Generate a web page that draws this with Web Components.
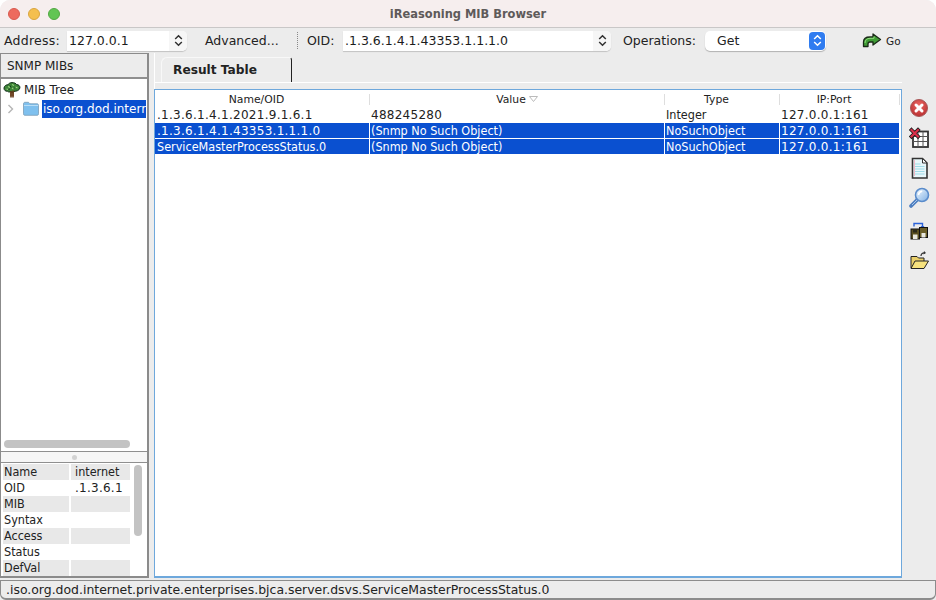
<!DOCTYPE html>
<html>
<head>
<meta charset="utf-8">
<title>iReasoning MIB Browser</title>
<style>
  html, body { margin: 0; height: 100%; background: #fff; }
  body { font: 12.5px "DejaVu Sans", sans-serif; color: #222; overflow: hidden; }
</style>
</head>
<body>
<mib-window>
  <mib-titlebar slot="title">iReasoning MIB Browser</mib-titlebar>
  <mib-toolbar slot="toolbar"></mib-toolbar>
  <mib-sidebar slot="side"></mib-sidebar>
  <mib-results slot="main"></mib-results>
  <mib-rail slot="rail"></mib-rail>
  <mib-status slot="status">.iso.org.dod.internet.private.enterprises.bjca.server.dsvs.ServiceMasterProcessStatus.0</mib-status>
</mib-window>

<script>
class MibWindow extends HTMLElement {
  constructor() {
    super();
    this.attachShadow({ mode: 'open' });
    this.shadowRoot.innerHTML = `
      <style>
        :host {
          display: grid;
          width: 936px;
          height: 600px;
          grid-template-rows: 28px 25px 1fr 20px;
          grid-template-columns: 149px 1fr 34px;
          grid-template-areas:
            "title title title"
            "toolbar toolbar toolbar"
            "side main rail"
            "status status status";
          background: #ececec;
          border-radius: 10px 10px 0 0;
          overflow: hidden;
        }
        ::slotted([slot=title]) { grid-area: title; }
        ::slotted([slot=toolbar]) { grid-area: toolbar; }
        ::slotted([slot=side]) { grid-area: side; }
        ::slotted([slot=main]) { grid-area: main; }
        ::slotted([slot=rail]) { grid-area: rail; }
        ::slotted([slot=status]) { grid-area: status; }
      </style>
      <slot name="title"></slot>
      <slot name="toolbar"></slot>
      <slot name="side"></slot>
      <slot name="main"></slot>
      <slot name="rail"></slot>
      <slot name="status"></slot>
    `;
  }
}

class MibTitlebar extends HTMLElement {
  constructor() {
    super();
    this.attachShadow({ mode: 'open' });
    this.shadowRoot.innerHTML = `
      <style>
        :host {
          display: flex;
          align-items: center;
          justify-content: center;
          position: relative;
          background: #f6eeee;
          border-bottom: 1px solid #c9c7c7;
          box-sizing: border-box;
          font: bold 12.7px "DejaVu Sans", sans-serif;
          font-stretch: condensed;
          color: #5e5a5a;
        }
        .lights { position: absolute; left: 8px; top: 8px; display: flex; gap: 8px; }
        .lights i { width: 12px; height: 12px; border-radius: 50%; display: block; box-sizing: border-box; }
        .r { background: #ed6a5e; border: 1px solid #d85a50; }
        .y { background: #f4bf4f; border: 1px solid #d9a53f; }
        .g { background: #61c554; border: 1px solid #52a843; }
      </style>
      <div class="lights"><i class="r"></i><i class="y"></i><i class="g"></i></div>
      <slot></slot>
    `;
  }
}

class MibCombo extends HTMLElement {
  constructor() {
    super();
    this.attachShadow({ mode: 'open' });
    this.shadowRoot.innerHTML = `
      <style>
        :host {
          display: flex;
          align-items: center;
          height: 20px;
          background: #fff;
          border-radius: 0 5px 5px 0;
          box-shadow: 0 1px 1px rgba(0,0,0,.18);
          box-sizing: border-box;
          padding-left: 2px;
          font: 12.5px "DejaVu Sans", sans-serif;
          color: #1c1c1c;
        }
        .txt { flex: 1; white-space: nowrap; overflow: hidden; }
        .btn { width: 18px; height: 20px; display: flex; align-items: center; justify-content: center; background: #f6f6f6; border-radius: 0 5px 5px 0; }
      </style>
      <div class="txt"><slot></slot></div>
      <div class="btn">
        <svg width="9" height="13" viewBox="0 0 9 13" fill="none" stroke="#333" stroke-width="1.5">
          <path d="M1.2 5 4.5 1.7 7.8 5M1.2 8 4.5 11.3 7.8 8"/>
        </svg>
      </div>
    `;
  }
}

class MibToolbar extends HTMLElement {
  constructor() {
    super();
    this.attachShadow({ mode: 'open' });
    this.shadowRoot.innerHTML = `
      <style>
        :host {
          display: flex;
          align-items: center;
          padding-left: 4px;
          box-sizing: border-box;
          font: 12.5px "DejaVu Sans", sans-serif;
          color: #222;
          white-space: nowrap;
        }
        .lbl-addr { width: 56px; letter-spacing: .25px; }
        .addr { width: 120px; margin-left: 7px; }
        .adv { margin-left: 18px; width: 92px; }
        .sep { width: 0; height: 17px; border-left: 1px dotted #888; margin-right: 9px; }
        .lbl-oid { width: 30px; }
        .oid { width: 268px; margin-left: 6px; }
        .ops { margin-left: 12px; width: 73px; }
        .get {
          display: flex; align-items: center; justify-content: space-between;
          width: 121px; height: 20px; margin-left: 9px;
          background: #fff; border-radius: 5px;
          box-shadow: 0 1px 1px rgba(0,0,0,.25);
          padding: 0 1px 0 12px; box-sizing: border-box;
        }
        .stepper {
          width: 16px; height: 18px; border-radius: 4px; background: #2f7cf0;
          display: flex; align-items: center; justify-content: center;
        }
        .go { display: flex; align-items: center; gap: 4px; margin-left: 36px; font-size: 10.5px; }
      </style>
      <span class="lbl-addr">Address:</span>
      <mib-combo class="addr">127.0.0.1</mib-combo>
      <span class="adv">Advanced...</span>
      <i class="sep"></i>
      <span class="lbl-oid">OID:</span>
      <mib-combo class="oid">.1.3.6.1.4.1.43353.1.1.1.0</mib-combo>
      <span class="ops">Operations:</span>
      <div class="get">
        <span>Get</span>
        <div class="stepper">
          <svg width="9" height="13" viewBox="0 0 9 13" fill="none" stroke="#fff" stroke-width="1.5">
            <path d="M1.2 5 4.5 1.7 7.8 5M1.2 8 4.5 11.3 7.8 8"/>
          </svg>
        </div>
      </div>
      <div class="go">
        <svg width="20" height="15" viewBox="0 0 20 15">
          <path d="M1.5 13.5V9C1.5 5.5 4.5 4 8 4h3V1l7.5 5.5L11 12V9H8C6.5 9 6 10 6 11v2.5z" fill="#3f9c35" stroke="#1a2a18" stroke-width="1.3" stroke-linejoin="round"/>
          <path d="M3 10C3 7 5 5.3 8 5.3h4V3.5" fill="none" stroke="#8fdc7c" stroke-width="1"/>
        </svg>
        <span>Go</span>
      </div>
    `;
  }
}

class MibSidebar extends HTMLElement {
  constructor() {
    super();
    this.attachShadow({ mode: 'open' });
    const props = [['Name', 'internet'], ['OID', '.1.3.6.1'], ['MIB', ''], ['Syntax', ''], ['Access', ''], ['Status', ''], ['DefVal', '']];
    const rows = props.map(([k, v], i) => `
      <div class="row ${i % 2 ? '' : 'alt'}"><span class="k">${k}</span><span class="v ${i == 1 ? 'num' : ''}">${v}</span></div>`).join('');
    this.shadowRoot.innerHTML = `
      <style>
        :host {
          display: flex;
          flex-direction: column;
          border: 2px solid #8b8b8b;
          border-width: 1px 2px 2px 1px;
          box-sizing: border-box;
          margin-bottom: 2px;
          font: 12px "DejaVu Sans", sans-serif;
          color: #222;
          min-height: 0;
        }
        .head { display: flex; align-items: center; padding: 1px 0 0 6px; border-bottom: 2px solid #8f8f8f; height: 22px; }
        .tree { flex: 1; background: #fff; position: relative; border-bottom: 1px solid #8f8f8f; padding-top: 1px; }
        .node { display: flex; align-items: center; height: 19px; }
        .node svg { flex: none; }
        .root { padding-left: 2px; gap: 3px; font-size: 11.8px; }
        .child { padding-left: 6px; }
        .sel { background: #0a50d0; color: #fff; padding-left: 1px; width: 103px; overflow: hidden; white-space: nowrap; height: 18px; line-height: 18px; margin: 1px 0 0 3px; }
        .hbar { position: absolute; left: 3px; width: 126px; bottom: 3px; height: 8px; border-radius: 4px; background: #c3c3c3; }
        .split { height: 11px; display: flex; align-items: center; justify-content: center; background: #f6f6f6; border-bottom: 1px solid #8f8f8f; box-sizing: border-box; }
        .split i { width: 5px; height: 5px; border-radius: 50%; background: #d2d2d2; display: block; }
        .props { height: 112px; padding-top: 1px; background: #fff; display: flex; overflow: hidden; padding-left: 2px; font-size: 12.5px; font-stretch: condensed; }
        .grid { width: 127px; }
        .row { display: grid; grid-template-columns: 66px 59px; gap: 2px; height: 16px; line-height: 16px; }
        .row span { padding-left: 1px; }
        .row.alt span { background: #e8e8e8; }
        .row .v { padding-left: 4px; }
        .row .num { letter-spacing: .25px; font-size: 12px; font-stretch: normal; }
        .vbar { width: 8px; height: 71px; border-radius: 4px; background: #c3c3c3; margin: 1px 0 0 4px; }
      </style>
      <div class="head">SNMP MIBs</div>
      <div class="tree">
        <div class="node root">
          <svg width="18" height="16" viewBox="0 0 18 16">
            <path d="M8 15.500V10L5 7.500M10 15.500V10l3-3M9 11V6" fill="none" stroke="#5f3416" stroke-width="1.600"/>
            <path d="M9 .6C7 .6 5.500 1.600 5 2.800 3 2.600 1.200 4 1 6c-.2 2 1.500 3.500 3.500 3.300.8.900 2.400.9 3.300.2 1.200.6 2.500.5 3.200-.2 2.100.3 5.500-1 5.900-3.300.3-2-1.400-3.500-3.300-3.400C13 1.400 11.300.6 9 .6z" fill="#3d8438" stroke="#13301a"/>
            <path d="M5 4.500l2 1M9 2.500l2 1M12.500 5l2 1M3.500 7l1.500.5M9 6l1.500 1" stroke="#9ad27f" stroke-width="1.200"/>
            <path d="M7 3.500l1 2M11 6.500l1-1M5.500 7.500l1.500-.5" stroke="#163d1c"/>
            <path d="M8 14V9M10 14V8.500" fill="none" stroke="#6d3f1c" stroke-width="1.400"/>
          </svg>
          <span>MIB Tree</span>
        </div>
        <div class="node child">
          <svg width="7" height="10" viewBox="0 0 7 10" fill="none" stroke="#b5b5b5" stroke-width="1.400" style="margin-right:9px"><path d="M1.500 1 5.500 5 1.500 9"/></svg>
          <svg width="16" height="15" viewBox="0 0 16 15">
            <path d="M.5 3c0-1 .5-1.700 1.500-1.700h3.500l1.500 1.500h7c1 0 1.500.6 1.500 1.500v8.500c0 1-.5 1.500-1.500 1.500H2c-1 0-1.500-.5-1.500-1.500z" fill="#7fc0ee" stroke="#7b9cb5" stroke-width=".8"/>
            <rect x="1" y="4" width="14" height="1" fill="#b9def6"/>
          </svg>
          <div class="sel">iso.org.dod.internet</div>
        </div>
        <div class="hbar"></div>
      </div>
      <div class="split"><i></i></div>
      <div class="props">
        <div class="grid">${rows}</div>
        <div class="vbar"></div>
      </div>
    `;
  }
}

class MibResults extends HTMLElement {
  constructor() {
    super();
    this.attachShadow({ mode: 'open' });
    const data = [
      ['.1.3.6.1.4.1.2021.9.1.6.1', '488245280', 'Integer', '127.0.0.1:161', false],
      ['.1.3.6.1.4.1.43353.1.1.1.0', '(Snmp No Such Object)', 'NoSuchObject', '127.0.0.1:161', true],
      ['ServiceMasterProcessStatus.0', '(Snmp No Such Object)', 'NoSuchObject', '127.0.0.1:161', true]
    ];
    // numeric cells run wider and letter cells narrower than plain DejaVu
    const cell = t => `<span class="${/^[.\d:]+$/.test(t) ? 'num' : ''}">${t}</span>`;
    const rows = data.map(r => `
      <div class="row ${r[4] ? 'sel' : ''}">
        ${cell(r[0])}${cell(r[1])}${cell(r[2])}${cell(r[3])}
      </div>`).join('');
    this.shadowRoot.innerHTML = `
      <style>
        :host {
          display: flex;
          flex-direction: column;
          min-height: 0;
          font: 12.5px "DejaVu Sans", sans-serif;
          font-stretch: condensed;
          color: #222;
          padding-left: 5px;
        }
        .tabs { height: 30px; display: flex; align-items: flex-end; padding: 0 0 0 12px; border-bottom: 1px solid #fff; border-left: 1px solid #fff; flex: none; box-sizing: border-box; margin-left: 0; }
        .tab {
          width: 131px; height: 25px; box-sizing: border-box; margin-left: -6px;
          font: bold 12.2px "DejaVu Sans", sans-serif;
          padding: 5px 0 0 11px;
          background: #ececec;
          border-top: 1px solid #f8f8f8;
          border-left: 1px solid #f8f8f8;
          border-right: 1px solid #222;
          border-radius: 6px 3px 0 0;
        }
        .gap { height: 6px; flex: none; border-left: 1px solid #fff; }
        .frame {
          flex: 1; margin-bottom: 2px;
          background: #fff; border: 1px solid #6ea8dc; border-bottom-width: 2px;
          box-sizing: border-box; min-height: 0;
        }
        .cols { display: grid; grid-template-columns: 215px 295px 115px 120px; }
        .hdr { height: 17px; align-items: center; font-size: 10.8px; font-stretch: normal; text-align: center; padding-top: 2px; box-sizing: border-box; }
        .hdr span { border-right: 1px solid #dedede; height: 11px; line-height: 11px; box-sizing: border-box; padding-right: 11px; }
        .hdr span.value { padding-right: 0; }
        .hdr svg { margin-left: 3px; vertical-align: 1px; }
        .row { display: grid; grid-template-columns: 215px 295px 115px 120px; height: 15px; line-height: 16px; margin-bottom: 1px; }
        .row span { padding-left: 1px; white-space: nowrap; overflow: hidden; }
        .row span:first-child { padding-left: 2px; }
        .row .num { font-size: 12px; font-stretch: normal; letter-spacing: .27px; }
        .sel { color: #fff; }
        .sel span { background: #0a50d0; border-right: 1px solid #fff; }
      </style>
      <div class="tabs"><div class="tab">Result Table</div></div>
      <div class="gap"></div>
      <div class="frame">
        <div class="cols hdr">
          <span>Name/OID</span>
          <span class="value">Value<svg width="9" height="6" viewBox="0 0 9 6" fill="none" stroke="#bbb"><path d="M.5.5h8L4.500 5.500z"/></svg></span>
          <span>Type</span>
          <span>IP:Port</span>
        </div>
        ${rows}
      </div>
    `;
  }
}

class MibRail extends HTMLElement {
  constructor() {
    super();
    this.attachShadow({ mode: 'open' });
    this.shadowRoot.innerHTML = `
      <style>
        :host {
          display: flex;
          flex-direction: column;
          align-items: center;
          padding: 44px 0 0 0;
          gap: 8px;
          box-sizing: border-box;
        }
        svg { display: block; flex: none; }
      </style>
      <svg width="22" height="22" viewBox="0 0 22 22">
        <defs>
          <radialGradient id="red" cx=".5" cy=".35" r=".7"><stop offset="0" stop-color="#ee6a66"/><stop offset="1" stop-color="#b42a2c"/></radialGradient>
          <linearGradient id="lens" x1="0" y1="0" x2="1" y2="1"><stop offset="0" stop-color="#f4faff"/><stop offset="1" stop-color="#7fb0e4"/></linearGradient>
        </defs>
        <circle cx="11" cy="11" r="8.500" fill="url(#red)" stroke="#a8595a"/>
        <path d="M8 8l6 6M14 8l-6 6" stroke="#fff" stroke-width="3" stroke-linecap="round"/>
      </svg>
      <svg width="22" height="22" viewBox="0 0 22 22">
        <rect x="5" y="4.500" width="15" height="15.500" fill="#fff" stroke="#333" stroke-width="1.800"/>
        <path d="M5 9.500h15M5 14.500h15M10 4.500v15.500M15 4.500v15.500" stroke="#555"/>
        <path d="M3.500 3l6.500 6.500M10 3l-6.500 6.500" stroke="#1a1a1a" stroke-width="3.800" stroke-linecap="square"/>
        <path d="M3.500 3l6.500 6.500M10 3l-6.500 6.500" stroke="#d9304a" stroke-width="2.200" stroke-linecap="square"/>
      </svg>
      <svg width="22" height="22" viewBox="0 0 22 22">
        <path d="M4.500 1.500h10l4.500 4.500v15h-14.500z" fill="#e8f7fa" stroke="#333" stroke-width="1.600"/>
        <path d="M14.500 1.500v4.500h4.500z" fill="#fff" stroke="#333"/>
        <path d="M6.500 7h6M6.500 9.500h10M6.500 12h10M6.500 14.500h10M6.500 17h10" stroke="#9fdbe8"/>
        <path d="M6.500 3v16" stroke="#f0b8c8"/>
      </svg>
      <svg width="22" height="22" viewBox="0 0 22 22">
        <path d="M9.500 12.500 3 19" stroke="#4e7fc0" stroke-width="3.800" stroke-linecap="round"/>
        <path d="M9 13 4 18" stroke="#a9c6ea" stroke-width="1"/>
        <circle cx="14" cy="8" r="6.500" fill="url(#lens)" stroke="#5a8ccb" stroke-width="1.600"/>
        <path d="M10.500 8c.2-2 1.700-3.500 3.700-3.700" stroke="#fff" stroke-width="1.500" fill="none"/>
      </svg>
      <svg width="22" height="22" viewBox="0 0 22 22" style="margin-top:3px">
        <path d="M6 6.500V3.500h8.500v3.500" fill="none" stroke="#2a62d8" stroke-width="1.400"/>
        <path d="M12.500 6l2 2 2-2z" fill="#2a62d8"/>
        <rect x="3" y="9" width="8.500" height="10" fill="#5b5020" stroke="#111"/>
        <rect x="11.500" y="7.500" width="8" height="10" fill="#6a5e28" stroke="#111"/>
        <rect x="5" y="14.500" width="4.500" height="4.500" fill="#e8e8e0"/>
        <rect x="13.500" y="13" width="4" height="4.500" fill="#e8e8e0"/>
        <rect x="5" y="9.500" width="4" height="3" fill="#2b2a1a"/>
      </svg>
      <svg width="22" height="22" viewBox="0 0 22 22">
        <path d="M13 6c0-2.200 1.800-3.500 4-3" fill="none" stroke="#333" stroke-width="1.200"/>
        <path d="M16 1l2 2-2.500 1.500z" fill="#333"/>
        <path d="M3 18V6.500h6l1.500 1.500h5.500v3" fill="#e9cf6a" stroke="#222"/>
        <path d="M3 18.500 7 11h13.500l-4.500 7.500z" fill="#f6e27e" stroke="#222"/>
      </svg>
    `;
  }
}

class MibStatus extends HTMLElement {
  constructor() {
    super();
    this.attachShadow({ mode: 'open' });
    this.shadowRoot.innerHTML = `
      <style>
        :host {
          display: flex;
          align-items: center;
          border: 1px solid #8c8c8c;
          border-width: 1px 1px 2px 1px;
          border-radius: 0 0 6px 6px;
          padding-left: 5px;
          box-sizing: border-box;
          font: 12.44px "DejaVu Sans", sans-serif;
          color: #222;
          white-space: nowrap;
        }
      </style>
      <slot></slot>
    `;
  }
}

customElements.define('mib-window', MibWindow);
customElements.define('mib-titlebar', MibTitlebar);
customElements.define('mib-combo', MibCombo);
customElements.define('mib-toolbar', MibToolbar);
customElements.define('mib-sidebar', MibSidebar);
customElements.define('mib-results', MibResults);
customElements.define('mib-rail', MibRail);
customElements.define('mib-status', MibStatus);
</script>
</body>
</html>
